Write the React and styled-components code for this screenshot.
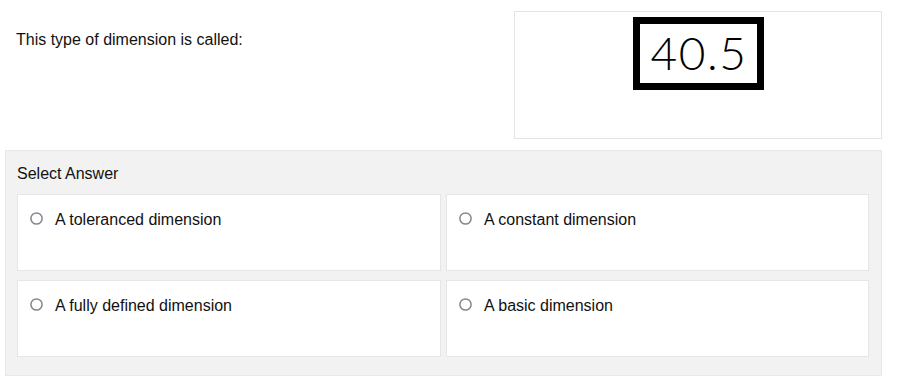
import React from 'react'
import styled, { createGlobalStyle } from 'styled-components'

const GlobalStyle = createGlobalStyle`
  html, body {
    margin: 0;
    padding: 0;
    background: #ffffff;
  }
  body {
    font-family: 'Liberation Sans', Arial, sans-serif;
    color: #111111;
  }
`

const Page = styled.div`
  width: 877px;
  padding: 11px 0 0 5px;
`

const QuestionRow = styled.div`
  display: flex;
  justify-content: space-between;
  align-items: flex-start;
  margin-bottom: 11px;
`

const QuestionText = styled.p`
  margin: 0;
  padding: 20px 0 0 11px;
  font-size: 16px;
  line-height: 18px;
`

const Figure = styled.div`
  box-sizing: border-box;
  width: 368px;
  height: 128px;
  border: 1px solid #e4e4e4;
  display: flex;
  justify-content: center;
  align-items: flex-start;
  padding-top: 5px;
`

const Dimension = styled.div`
  box-sizing: border-box;
  width: 131px;
  height: 73px;
  border: 7px solid #000000;
  display: flex;
  align-items: center;
  justify-content: center;
  font-family: Lato, 'Open Sans', sans-serif;
  font-weight: 300;
  font-size: 46px;
  line-height: 1;
  letter-spacing: 1.5px;
  color: #000000;
  padding: 0 0 2px 2px;
`

const Panel = styled.section`
  box-sizing: border-box;
  width: 877px;
  background: #f2f2f2;
  border: 1px solid #e8e8e8;
  padding: 14px 11px 18px 11px;
`

const PanelTitle = styled.div`
  font-size: 16px;
  line-height: 18px;
  margin-bottom: 11px;
`

const Options = styled.div`
  display: grid;
  grid-template-columns: 424px 423px;
  column-gap: 5px;
  row-gap: 9px;
`

const Option = styled.label`
  box-sizing: border-box;
  height: 77px;
  background: #ffffff;
  border: 1px solid #e6e6e6;
  padding: 16px 12px;
  display: flex;
  align-items: flex-start;
  gap: 12px;
  font-size: 16px;
  line-height: 18px;
  cursor: pointer;
`

const RadioMark = styled.svg`
  flex: none;
  width: 13px;
  height: 13px;
  margin-top: 1px;
`

const Radio = () => (
  <RadioMark viewBox="0 0 13 13">
    <circle cx="6.5" cy="6.5" r="5.6" fill="#ffffff" stroke="#85858f" strokeWidth="1.5" />
  </RadioMark>
)

const answers = [
  'A toleranced dimension',
  'A constant dimension',
  'A fully defined dimension',
  'A basic dimension',
]

const App = () => (
  <>
    <GlobalStyle />
    <Page>
      <QuestionRow>
        <QuestionText>This type of dimension is called:</QuestionText>
        <Figure>
          <Dimension>40.5</Dimension>
        </Figure>
      </QuestionRow>
      <Panel>
        <PanelTitle>Select Answer</PanelTitle>
        <Options>
          {answers.map((text) => (
            <Option key={text}>
              <Radio />
              <span>{text}</span>
            </Option>
          ))}
        </Options>
      </Panel>
    </Page>
  </>
)

export default App
